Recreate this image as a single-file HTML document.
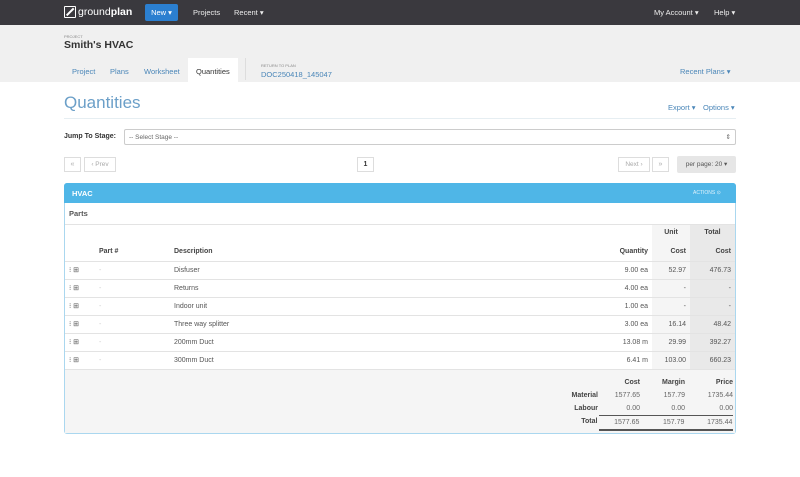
<!DOCTYPE html><html><head><style>
*{box-sizing:border-box;margin:0;padding:0}
body{width:800px;height:477px;background:#fff;font-family:"Liberation Sans",sans-serif;font-size:7.5px;color:#444;position:relative;overflow:hidden}
.a{position:absolute}
.lnk{color:#4a86b8}
table{border-collapse:collapse;position:absolute;left:65px;width:670px}
td{height:18px;border-top:1px solid #e3e3e3;padding:0 4px;font-size:7px;white-space:nowrap;color:#555}
.r{text-align:right}.u{background:#f5f5f5}.t{background:#e9e9e9}
.b{font-weight:bold}
</style></head><body>
<div class="a" style="left:0;top:0;width:800px;height:25px;background:#3a393e"></div>
<div class="a" style="left:64px;top:6px;width:12px;height:12px;border:1.5px solid #fff;border-radius:1px"></div>
<div class="a" style="left:65px;top:11px;width:10px;height:1.5px;background:#fff;transform:rotate(-45deg)"></div>
<div class="a" style="left:78px;top:6px;color:#fff;font-size:10.5px">ground<b>plan</b></div>
<div class="a" style="left:145px;top:4px;width:33px;height:17px;background:#2b7fd0;border-radius:2px;color:#fff;font-size:7.5px;line-height:17px;text-align:center">New ▾</div>
<div class="a" style="left:193px;top:8px;color:#eee">Projects</div>
<div class="a" style="left:234px;top:8px;color:#eee">Recent ▾</div>
<div class="a" style="left:654px;top:8px;color:#eee">My Account ▾</div>
<div class="a" style="left:714px;top:8px;color:#eee">Help ▾</div>
<div class="a" style="left:0;top:25px;width:800px;height:57px;background:#f0f0f0"></div>
<div class="a" style="left:64px;top:34px;font-size:4px;color:#888">PROJECT</div>
<div class="a" style="left:64px;top:39px;font-size:10.5px;font-weight:bold;color:#333">Smith's HVAC</div>
<div class="a" style="left:188px;top:58px;width:50px;height:24px;background:#fff"></div>
<div class="a" style="left:245px;top:58px;width:1px;height:22px;background:#ddd"></div>
<div class="a lnk" style="left:72px;top:67px">Project</div>
<div class="a lnk" style="left:110px;top:67px">Plans</div>
<div class="a lnk" style="left:144px;top:67px">Worksheet</div>
<div class="a" style="left:196px;top:67px;color:#333">Quantities</div>
<div class="a" style="left:261px;top:63px;font-size:4px;color:#888">RETURN TO PLAN</div>
<div class="a lnk" style="left:261px;top:70px">DOC250418_145047</div>
<div class="a lnk" style="left:680px;top:67px">Recent Plans ▾</div>
<div class="a" style="left:64px;top:93px;font-size:17px;color:#6b9fc8;font-weight:300">Quantities</div>
<div class="a lnk" style="left:668px;top:103px">Export ▾</div>
<div class="a lnk" style="left:703px;top:103px">Options ▾</div>
<div class="a" style="left:64px;top:118px;width:672px;height:1px;background:#e6eef2"></div>
<div class="a b" style="left:64px;top:133px;font-size:7px;color:#333">Jump To Stage:</div>
<div class="a" style="left:124px;top:129px;width:612px;height:16px;border:1px solid #ccc;border-radius:2px;padding:4px;font-size:6.5px;color:#666">-- Select Stage --<span style="position:absolute;right:4px;top:3px">⇕</span></div>
<div class="a" style="left:64px;top:157px;width:17px;height:15px;border:1px solid #ddd;color:#aaa;font-size:7px;text-align:center;line-height:13px">«</div>
<div class="a" style="left:84px;top:157px;width:32px;height:15px;border:1px solid #ddd;color:#aaa;font-size:6.5px;text-align:center;line-height:13px">‹ Prev</div>
<div class="a b" style="left:357px;top:157px;width:17px;height:15px;border:1px solid #ddd;color:#333;font-size:7px;text-align:center;line-height:13px">1</div>
<div class="a" style="left:618px;top:157px;width:32px;height:15px;border:1px solid #ddd;color:#aaa;font-size:6.5px;text-align:center;line-height:13px">Next ›</div>
<div class="a" style="left:652px;top:157px;width:17px;height:15px;border:1px solid #ddd;color:#aaa;font-size:7px;text-align:center;line-height:13px">»</div>
<div class="a" style="left:677px;top:156px;width:59px;height:17px;background:#e6e6e6;border-radius:2px;color:#555;font-size:6.5px;text-align:center;line-height:17px">per page: 20 ▾</div>
<div class="a" style="left:64px;top:183px;width:672px;height:251px;border:1px solid #aad7ef;border-radius:3px"></div>
<div class="a" style="left:64px;top:183px;width:672px;height:20px;background:#4fb6e7;border-radius:3px 3px 0 0"></div>
<div class="a b" style="left:72px;top:189px;color:#fff">HVAC</div>
<div class="a" style="left:693px;top:190px;color:#e0f2fb;font-size:5px">ACTIONS ⊙</div>
<div class="a b" style="left:69px;top:209px;color:#555">Parts</div>
<div class="a" style="left:65px;top:224px;width:670px;height:1px;background:#e3e3e3"></div>
<div class="a u" style="left:652px;top:225px;width:38px;height:144px"></div>
<div class="a t" style="left:690px;top:225px;width:45px;height:144px"></div>
<div class="a b" style="left:652px;top:229px;width:38px;text-align:center;font-size:7px">Unit</div>
<div class="a b" style="left:690px;top:229px;width:45px;text-align:center;font-size:7px">Total</div>
<table style="top:243px">
<tr class="b"><td style="width:30px;border:0"></td><td style="width:75px;border:0;color:#444">Part #</td><td style="border:0;color:#444">Description</td><td class="r" style="border:0;color:#444">Quantity</td><td class="r" style="width:38px;border:0;color:#444">Cost</td><td class="r" style="width:45px;border:0;color:#444">Cost</td></tr>
<tr><td>⁝ ⊞</td><td style="color:#ccc">-</td><td>Disfuser</td><td class="r">9.00 ea</td><td class="r">52.97</td><td class="r">476.73</td></tr>
<tr><td>⁝ ⊞</td><td style="color:#ccc">-</td><td>Returns</td><td class="r">4.00 ea</td><td class="r">-</td><td class="r">-</td></tr>
<tr><td>⁝ ⊞</td><td style="color:#ccc">-</td><td>Indoor unit</td><td class="r">1.00 ea</td><td class="r">-</td><td class="r">-</td></tr>
<tr><td>⁝ ⊞</td><td style="color:#ccc">-</td><td>Three way splitter</td><td class="r">3.00 ea</td><td class="r">16.14</td><td class="r">48.42</td></tr>
<tr><td>⁝ ⊞</td><td style="color:#ccc">-</td><td>200mm Duct</td><td class="r">13.08 m</td><td class="r">29.99</td><td class="r">392.27</td></tr>
<tr><td>⁝ ⊞</td><td style="color:#ccc">-</td><td>300mm Duct</td><td class="r">6.41 m</td><td class="r">103.00</td><td class="r">660.23</td></tr>
</table>
<div class="a" style="left:65px;top:369px;width:670px;height:64px;background:#f5f5f5;border-top:1px solid #e3e3e3"></div>
<div class="a" style="left:540px;top:376px;width:193px;font-size:7px;line-height:13px">
<div style="display:flex"><span style="width:58px"></span><b style="width:42px;text-align:right">Cost</b><b style="width:45px;text-align:right">Margin</b><b style="width:48px;text-align:right">Price</b></div>
<div style="display:flex"><b style="width:58px;text-align:right">Material</b><span style="width:42px;text-align:right;color:#666">1577.65</span><span style="width:45px;text-align:right;color:#666">157.79</span><span style="width:48px;text-align:right;color:#666">1735.44</span></div>
<div style="display:flex"><b style="width:58px;text-align:right">Labour</b><span style="width:42px;text-align:right;color:#666">0.00</span><span style="width:45px;text-align:right;color:#666">0.00</span><span style="width:48px;text-align:right;color:#666">0.00</span></div>
<div style="display:flex"><b style="width:58px;text-align:right">Total</b><span style="width:135px;display:flex;margin-left:2px;border-top:1px solid #555;border-bottom:2px solid #555;color:#666"><span style="width:40px;text-align:right">1577.65</span><span style="width:45px;text-align:right">157.79</span><span style="width:48px;text-align:right">1735.44</span></span></div>
</div>
</body></html>
